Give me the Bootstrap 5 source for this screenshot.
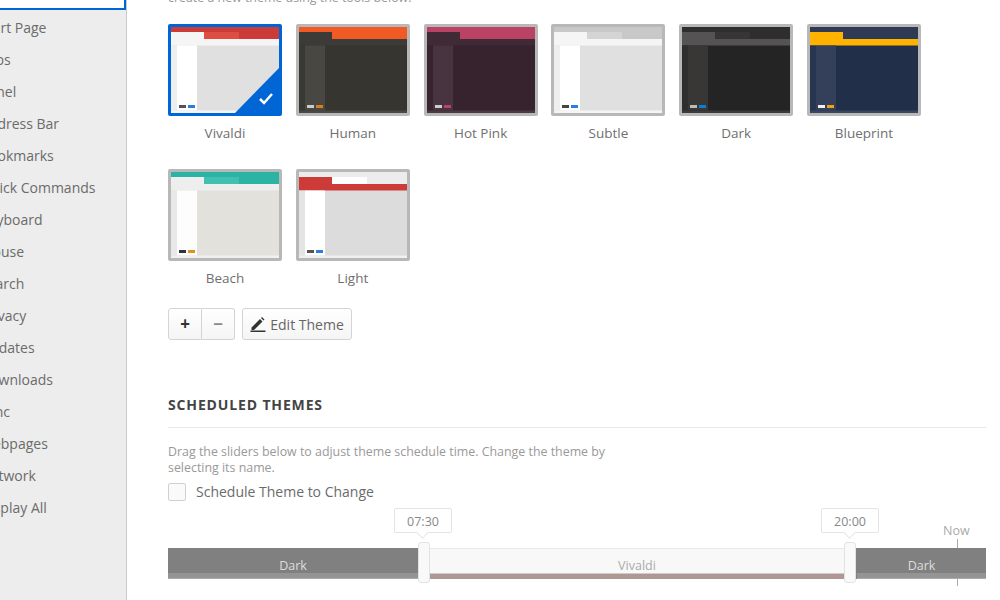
<!DOCTYPE html>
<html lang="en">
<head>
<meta charset="utf-8">
<title>Themes</title>
<link href="https://cdn.jsdelivr.net/npm/bootstrap@5.3.0/dist/css/bootstrap.min.css" rel="stylesheet">
<style>
html,body{height:600px;overflow:hidden;background:#fff}
body{font-family:"Open Sans","Noto Sans","Liberation Sans",sans-serif;font-size:13px;color:#666}
.shell{height:600px;width:1000px;overflow:hidden}
.side{width:127px;flex:none;background:#ededed;border-right:1px solid #c9c9c9;height:600px;overflow:hidden}
.side-list{margin:-22px 0 0 -22px;width:148px;list-style:none;padding:0}
.side-list li{height:32px;line-height:32px;padding-left:2px;font-size:14px;color:#6b6b6b;white-space:nowrap}
.side-list li.on{background:#fff;border:2px solid #0066d6;color:#0066d6;line-height:28px;margin-bottom:2px}
.pane{width:818px;margin-left:41px;margin-top:-10px;flex:none}
.intro{font-size:12.4px;line-height:16px;height:34px;color:#999}
.thumbs{display:grid;grid-template-columns:repeat(6,114px);column-gap:13.8px;row-gap:27px}
.tile{width:114px;text-align:center;font-size:13.5px;line-height:18px;color:#6f6f6f}
.shot{display:block;width:114px;height:92px;border:3px solid #b8b8b8;border-radius:2px;margin-bottom:8px;background:#fff}
.shot.sel{border-color:#0066d6}
.t-viv{--top:#cc3b37;--t1:#f5f5f5;--t2:#dd4e40;--ad:#f5f5f5;--st:#eee;--pa:#fff;--ma:#e0e0e0;--bt:#f5f5f5;--b1:#555;--b2:#2a7ee0}
.t-hum{--top:#f15a24;--t1:#3c3b37;--t2:#f15a24;--ad:#3c3b37;--st:#383835;--pa:#484741;--ma:#36352f;--bt:#4a4944;--b1:#ccc;--b2:#d4801c}
.t-pin{--top:#b94265;--t1:#3f2a36;--t2:#b94265;--ad:#3f2a36;--st:#38242f;--pa:#483340;--ma:#37232e;--bt:#4b3a44;--b1:#ccc;--b2:#b94265}
.t-sub{--top:#c8c8c8;--t1:#f5f5f5;--t2:#d4d4d4;--ad:#f5f5f5;--st:#eee;--pa:#fff;--ma:#e0e0e0;--bt:#f5f5f5;--b1:#444;--b2:#2a7ee0}
.t-dar{--top:#2e2e2e;--t1:#565354;--t2:#363636;--ad:#565354;--st:#2e2e2e;--pa:#383736;--ma:#242424;--bt:#3c3c3c;--b1:#bbb;--b2:#0a7fd0}
.t-blu{--top:#2f3b55;--t1:#ffb300;--t2:#2f3b55;--ad:#ffb300;--st:#263550;--pa:#343f59;--ma:#222f48;--bt:#3a4660;--b1:#eee;--b2:#f0a010}
.t-bea{--top:#2bb3a3;--t1:#eee;--t2:#3fc0b0;--ad:#eee;--st:#e8e8e8;--pa:#fdfdfd;--ma:#e2e1dc;--bt:#f0f0f0;--b1:#333;--b2:#e09020}
.t-lig{--top:#ececec;--t1:#cc3b37;--t2:#fff;--ad:#cc3b37;--st:#e4e4e4;--pa:#fff;--ma:#dcdcdc;--bt:#f0f0f0;--b1:#555;--b2:#2a7ee0}
.tools{margin-top:21px;height:32px}
.tbtn{height:32px;background:linear-gradient(#fff,#f5f5f5);border:1px solid #d4d4d4;color:#666;font-size:14px;padding:0;display:flex;align-items:center;justify-content:center}
.tbtn-sq{width:34px;border-radius:3px 0 0 3px;font-weight:700;color:#333;font-size:17px}
.tbtn-sq+.tbtn-sq{width:33px;border-left:0;border-radius:0 3px 3px 0;color:#888}
.tbtn-ed{width:110px;border-radius:3px;margin-left:7px;gap:4px}
.sec-h{margin:56px 0 0;font-size:14px;line-height:18px;font-weight:700;letter-spacing:.85px;text-transform:uppercase;color:#444}
.sec-line{border-top:1px solid #e8e8e8;margin-top:13px}
.desc{width:460px;font-size:12.4px;line-height:16px;color:#999;margin-top:16px}
.chk{margin-top:7px;gap:10px;height:18px;font-size:14px;line-height:18px;color:#6b6b6b}
.box{width:18px;height:18px;border:1px solid #d0d0d0;border-radius:2px;background:#fafafa}
.sched{position:relative;height:80px;margin-top:7px}
.bar{position:absolute;left:0;right:0;top:40px;height:31px;display:flex;font-size:12.5px;text-align:center}
.seg{display:flex;flex-direction:column}
.seg-lbl{height:25px;line-height:35px;overflow:hidden}
.seg-ln{height:6px}
.seg-d{background:#808080;color:#ddd}
.seg-d .seg-ln{background:#949494;border-bottom:1px solid #aaa}
.seg-v{background:#f8f8f8;color:#aaa;box-shadow:inset 0 1px #e8e8e8;padding-left:11px}
.seg-e{padding-left:12px}
.seg-v .seg-ln{background:#b09892;border-top:1px solid #ccc}
.knob{position:absolute;top:34px;width:12px;height:41px;background:#f9f9f9;border:1px solid #e2e2e2;border-radius:3px}
.tip{position:absolute;top:0;width:58px;height:25px;background:#fff;border:1px solid #e4e4e4;border-radius:2px;font-size:12.5px;line-height:25px;text-align:center;color:#888}
.tip::after{content:"";position:absolute;left:23px;top:19px;width:9px;height:9px;background:#fff;border-right:1px solid #e4e4e4;border-bottom:1px solid #e4e4e4;transform:rotate(45deg)}
.nowl{position:absolute;left:775px;top:15px;font-size:12.5px;line-height:16px;color:#aaa}
.nowt{position:absolute;left:789px;width:1px;background:#aaa}
</style>
</head>
<body>
<svg width="0" height="0" class="position-absolute">
<symbol id="mini" viewBox="0 0 108 86">
<rect width="108" height="86" fill="var(--ma)"/>
<rect width="108" height="12" fill="var(--top)"/>
<rect y="5" width="33" height="8" fill="var(--t1)"/>
<rect x="33" y="5" width="35" height="7" fill="var(--t2)"/>
<rect y="12" width="108" height="6.500" fill="var(--ad)"/>
<rect y="18.500" width="6" height="65" fill="var(--st)"/>
<rect x="6" y="18.500" width="20" height="65" fill="var(--pa)"/>
<rect y="83.500" width="108" height="2.500" fill="var(--bt)"/>
<rect x="8" y="78" width="7" height="3" fill="var(--b1)"/>
<rect x="17" y="78" width="7" height="3" fill="var(--b2)"/>
</symbol>
</svg>
<div class="shell d-flex">
<nav class="side">
<ul class="side-list">
<li class="on">Themes</li>
<li>Start Page</li><li>Tabs</li><li>Panel</li><li>Address Bar</li><li>Bookmarks</li><li>Quick Commands</li><li>Keyboard</li><li>Mouse</li><li>Search</li><li>Privacy</li><li>Updates</li><li>Downloads</li><li>Sync</li><li>Webpages</li><li>Network</li><li>Display All</li>
</ul>
</nav>
<main class="pane">
<div class="intro">create a new theme using the tools below.</div>
<div class="thumbs">
<div class="tile"><svg class="shot sel t-viv" viewBox="0 0 108 86"><use href="#mini"/><path d="M108 41 64 86h44z" fill="#0066d6"/><path d="M89 72l4 4 8-9" fill="none" stroke="#fff" stroke-width="2.500"/></svg>Vivaldi</div>
<div class="tile"><svg class="shot t-hum" viewBox="0 0 108 86"><use href="#mini"/></svg>Human</div>
<div class="tile"><svg class="shot t-pin" viewBox="0 0 108 86"><use href="#mini"/></svg>Hot Pink</div>
<div class="tile"><svg class="shot t-sub" viewBox="0 0 108 86"><use href="#mini"/></svg>Subtle</div>
<div class="tile"><svg class="shot t-dar" viewBox="0 0 108 86"><use href="#mini"/></svg>Dark</div>
<div class="tile"><svg class="shot t-blu" viewBox="0 0 108 86"><use href="#mini"/></svg>Blueprint</div>
<div class="tile"><svg class="shot t-bea" viewBox="0 0 108 86"><use href="#mini"/></svg>Beach</div>
<div class="tile"><svg class="shot t-lig" viewBox="0 0 108 86"><use href="#mini"/></svg>Light</div>
</div>
<div class="tools d-flex">
<button class="tbtn tbtn-sq" type="button">+</button>
<button class="tbtn tbtn-sq" type="button">−</button>
<button class="tbtn tbtn-ed" type="button"><svg width="16" height="16" viewBox="0 0 15 16"><path d="M1 11.500 9.500 3l2.500 2.500L3.500 14H1zM10.500 2l1-1 2.500 2.500-1 1z" fill="#333"/><rect y="14.500" width="15" height="1.500" fill="#333"/></svg>Edit Theme</button>
</div>
<h2 class="sec-h">Scheduled Themes</h2>
<div class="sec-line"></div>
<p class="desc mb-0">Drag the sliders below to adjust theme schedule time. Change the theme by selecting its name.</p>
<div class="chk d-flex align-items-center"><span class="box"></span>Schedule Theme to Change</div>
<div class="sched">
<div class="tip" style="left:226px">07:30</div>
<div class="tip" style="left:653px">20:00</div>
<div class="nowl">Now</div>
<div class="nowt" style="top:31px;height:9px"></div>
<div class="nowt" style="top:71px;height:7px"></div>
<div class="bar">
<div class="seg seg-d" style="width:250px"><div class="seg-lbl">Dark</div><div class="seg-ln"></div></div>
<div class="seg seg-v" style="width:427px"><div class="seg-lbl">Vivaldi</div><div class="seg-ln"></div></div>
<div class="seg seg-d seg-e" style="width:141px"><div class="seg-lbl">Dark</div><div class="seg-ln"></div></div>
</div>
<div class="knob" style="left:250px"></div>
<div class="knob" style="left:676px"></div>
</div>
</main>
</div>
</body>
</html>
